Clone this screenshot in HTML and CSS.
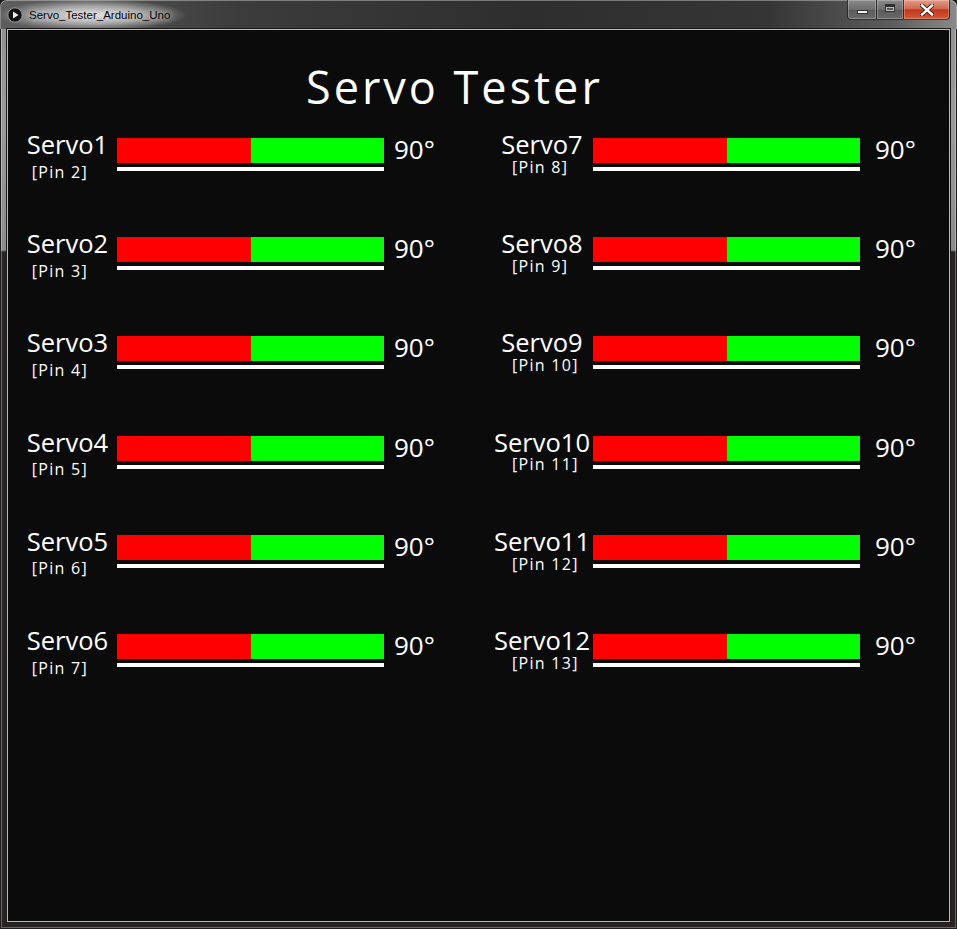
FILE: index.html
```html
<!DOCTYPE html>
<html>
<head>
<meta charset="utf-8">
<title>Servo_Tester_Arduino_Uno</title>
<link rel="stylesheet" href="styles.css">
</head>
<body>
<div class="window">
  <div class="titlebar">
    <div class="app-title">
      <span class="app-icon">
        <svg width="16" height="16" viewBox="0 0 16 16">
          <circle cx="8" cy="8" r="7.2" fill="#111" stroke="#9a9a9a" stroke-width="1"/>
          <path d="M6 4.5 L11.5 8 L6 11.5 Z" fill="#f2f2f2"/>
        </svg>
      </span>
      <span class="app-name">Servo_Tester_Arduino_Uno</span>
    </div>
    <div class="controls">
      <span class="btn btn-min"><span class="min-glyph"></span></span>
      <span class="btn btn-max"><span class="max-glyph"></span></span>
      <span class="btn btn-close">
        <svg width="14" height="12" viewBox="0 0 14 12">
          <path d="M2 1.5 L12 10.5 M12 1.5 L2 10.5" stroke="#3a1a16" stroke-width="4.2" stroke-linecap="square"/>
          <path d="M2 1.5 L12 10.5 M12 1.5 L2 10.5" stroke="#ffffff" stroke-width="2.4" stroke-linecap="square"/>
        </svg>
      </span>
    </div>
  </div>
  <div class="client">
    <h1 class="title">Servo Tester</h1>
    <div class="servo-grid">
      <div class="servo">
        <div class="label"><div class="name">Servo1</div><div class="pin">[Pin 2]</div></div>
        <div class="gauge"><div class="bar"><div class="bar-red" style="width:50%"></div><div class="bar-green"></div></div><div class="track"></div></div>
        <div class="deg">90°</div>
      </div>
      <div class="servo">
        <div class="label"><div class="name">Servo2</div><div class="pin">[Pin 3]</div></div>
        <div class="gauge"><div class="bar"><div class="bar-red" style="width:50%"></div><div class="bar-green"></div></div><div class="track"></div></div>
        <div class="deg">90°</div>
      </div>
      <div class="servo">
        <div class="label"><div class="name">Servo3</div><div class="pin">[Pin 4]</div></div>
        <div class="gauge"><div class="bar"><div class="bar-red" style="width:50%"></div><div class="bar-green"></div></div><div class="track"></div></div>
        <div class="deg">90°</div>
      </div>
      <div class="servo">
        <div class="label"><div class="name">Servo4</div><div class="pin">[Pin 5]</div></div>
        <div class="gauge"><div class="bar"><div class="bar-red" style="width:50%"></div><div class="bar-green"></div></div><div class="track"></div></div>
        <div class="deg">90°</div>
      </div>
      <div class="servo">
        <div class="label"><div class="name">Servo5</div><div class="pin">[Pin 6]</div></div>
        <div class="gauge"><div class="bar"><div class="bar-red" style="width:50%"></div><div class="bar-green"></div></div><div class="track"></div></div>
        <div class="deg">90°</div>
      </div>
      <div class="servo">
        <div class="label"><div class="name">Servo6</div><div class="pin">[Pin 7]</div></div>
        <div class="gauge"><div class="bar"><div class="bar-red" style="width:50%"></div><div class="bar-green"></div></div><div class="track"></div></div>
        <div class="deg">90°</div>
      </div>
      <div class="servo r">
        <div class="label"><div class="name">Servo7</div><div class="pin">[Pin 8]</div></div>
        <div class="gauge"><div class="bar"><div class="bar-red" style="width:50%"></div><div class="bar-green"></div></div><div class="track"></div></div>
        <div class="deg">90°</div>
      </div>
      <div class="servo r">
        <div class="label"><div class="name">Servo8</div><div class="pin">[Pin 9]</div></div>
        <div class="gauge"><div class="bar"><div class="bar-red" style="width:50%"></div><div class="bar-green"></div></div><div class="track"></div></div>
        <div class="deg">90°</div>
      </div>
      <div class="servo r">
        <div class="label"><div class="name">Servo9</div><div class="pin">[Pin 10]</div></div>
        <div class="gauge"><div class="bar"><div class="bar-red" style="width:50%"></div><div class="bar-green"></div></div><div class="track"></div></div>
        <div class="deg">90°</div>
      </div>
      <div class="servo r">
        <div class="label"><div class="name">Servo10</div><div class="pin">[Pin 11]</div></div>
        <div class="gauge"><div class="bar"><div class="bar-red" style="width:50%"></div><div class="bar-green"></div></div><div class="track"></div></div>
        <div class="deg">90°</div>
      </div>
      <div class="servo r">
        <div class="label"><div class="name">Servo11</div><div class="pin">[Pin 12]</div></div>
        <div class="gauge"><div class="bar"><div class="bar-red" style="width:50%"></div><div class="bar-green"></div></div><div class="track"></div></div>
        <div class="deg">90°</div>
      </div>
      <div class="servo r">
        <div class="label"><div class="name">Servo12</div><div class="pin">[Pin 13]</div></div>
        <div class="gauge"><div class="bar"><div class="bar-red" style="width:50%"></div><div class="bar-green"></div></div><div class="track"></div></div>
        <div class="deg">90°</div>
      </div>
    </div>
  </div>
</div>
</body>
</html>
```
FILE: styles.css
```css
* {
  box-sizing: border-box;
  margin: 0;
  padding: 0;
}

html, body {
  width: 957px;
  height: 929px;
  overflow: hidden;
  background: #1a1a1a;
}

body {
  margin: 0;
}

.window {
  width: 957px;
  height: 929px;
  display: flex;
  flex-direction: column;
  padding: 0 7px 7px;
  border-radius: 7px 7px 0 0;
  background: linear-gradient(180deg, #8f8f8f 0, #9a9a9a 120px, #8c8c8c 250px, #2a2324 252px, #2a2324 100%);
  box-shadow: inset 0 0 0 1px #1e1e1e, inset 0 0 0 2px rgba(255, 255, 255, 0.3);
}

.titlebar {
  height: 29px;
  margin: 0 -7px;
  padding: 0 7px;
  display: flex;
  justify-content: space-between;
  align-items: flex-start;
  border-radius: 7px 7px 0 0;
  background:
    radial-gradient(ellipse 95px 16px at 92px 15px, rgba(235, 235, 235, 0.95) 0, rgba(200, 200, 200, 0.7) 55%, rgba(80, 80, 80, 0) 100%),
    linear-gradient(90deg, #5e5e5e 0, #3c3c3c 25%, #2e2e2e 55%, #353535 80%, #5c5c5c 93%, #8a8a8a 100%);
  box-shadow: inset 0 1px 0 rgba(255, 255, 255, 0.35), inset 1px 0 0 rgba(255, 255, 255, 0.25), inset -1px 0 0 rgba(255, 255, 255, 0.25);
}

.app-title {
  display: flex;
  align-items: center;
  padding-top: 7px;
}

.app-icon {
  display: block;
  width: 16px;
  height: 16px;
}

.app-icon svg {
  display: block;
}

.app-name {
  margin-left: 6px;
  font-family: "Liberation Sans", Arial, sans-serif;
  font-size: 11.5px;
  line-height: 16px;
  color: #000;
  text-shadow: 0 0 6px rgba(255, 255, 255, 0.9);
}

.controls {
  display: flex;
}

.btn {
  display: flex;
  align-items: center;
  justify-content: center;
  height: 20px;
  border: 1px solid rgba(20, 20, 20, 0.75);
  border-top: none;
  box-shadow: inset 0 0 0 1px rgba(255, 255, 255, 0.25);
}

.btn-min {
  width: 29px;
  border-right: none;
  border-radius: 0 0 0 4px;
  background: linear-gradient(180deg, #8a8a8a 0, #6d6d6d 50%, #5a5a5a 51%, #6a6a6a 100%);
}

.btn-max {
  width: 27px;
  border-right: none;
  background: linear-gradient(180deg, #8a8a8a 0, #6d6d6d 50%, #5a5a5a 51%, #6a6a6a 100%);
}

.btn-close {
  width: 47px;
  border-radius: 0 0 4px 0;
  background: linear-gradient(180deg, #e49a88 0, #d06a50 45%, #c2381c 52%, #d25a38 100%);
}

.btn-close svg {
  display: block;
}

.min-glyph {
  display: block;
  width: 11px;
  height: 4px;
  margin-top: 4px;
  background: #f0f0f0;
  border: 1px solid #303030;
}

.max-glyph {
  display: block;
  width: 10px;
  height: 8px;
  margin-top: -3px;
  border: 1px solid #303030;
  border-top-width: 3px;
  background: #5a5a5a;
  box-shadow: inset 0 0 0 1px #bdbdbd;
}

.client {
  flex: 1;
  border: 1px solid #b9b9b9;
  background: #0b0b0b;
  box-shadow: 0 0 0 1px #1c1c1c;
  color: #ffffff;
  font-family: "Open Sans", "DejaVu Sans", sans-serif;
}

.title {
  margin: 32px 0 0 298px;
  font-size: 45px;
  line-height: 50px;
  font-weight: 400;
  letter-spacing: 3px;
  white-space: nowrap;
}

.servo-grid {
  display: grid;
  grid-template-columns: 474.5px 1fr;
  grid-template-rows: repeat(6, 99.2px);
  grid-auto-flow: column;
  margin: 19px 0 0 10px;
}

.servo {
  display: flex;
  align-items: flex-start;
}

.label {
  width: 99px;
  flex: none;
  display: flex;
  flex-direction: column;
}

.name {
  margin-top: 2px;
  font-size: 25.5px;
  line-height: 22px;
  text-align: center;
  white-space: nowrap;
}

.pin {
  margin-top: 9.6px;
  padding-left: 13.7px;
  font-size: 16px;
  line-height: 15px;
  letter-spacing: 1.3px;
  white-space: nowrap;
}

.servo.r .pin {
  margin-top: 4.8px;
  padding-left: 19.5px;
}

.gauge {
  width: 267px;
  flex: none;
  margin-top: 7px;
}

.servo.r .gauge {
  margin-left: 1.5px;
}

.bar {
  display: flex;
  height: 25px;
}

.bar-red {
  background: #ff0000;
}

.bar-green {
  flex: 1;
  background: #00ff00;
}

.track {
  height: 4px;
  margin-top: 4px;
  background: #ffffff;
}

.deg {
  margin: 5px 0 0 10px;
  font-size: 26px;
  line-height: 26px;
  white-space: nowrap;
}

.servo.r .deg {
  margin-left: 15px;
}
```
